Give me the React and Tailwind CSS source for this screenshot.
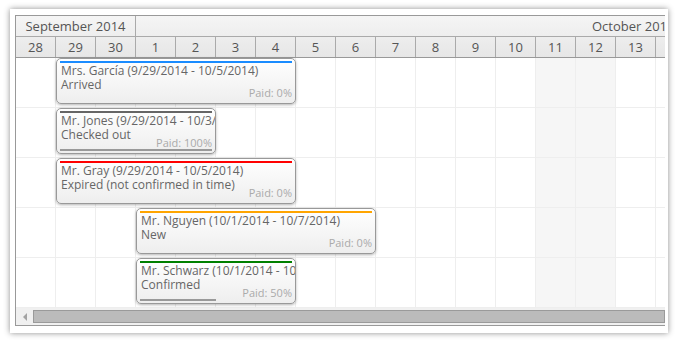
import React from 'react'

const days = [28, 29, 30, 1, 2, 3, 4, 5, 6, 7, 8, 9, 10, 11, 12, 13, 14]
const weekend = [11, 12]

const rows = [
  { start: 1, len: 6, name: 'Mrs. García (9/29/2014 - 10/5/2014)', status: 'Arrived', paid: 0, bar: 'bg-[#1a8cff]' },
  { start: 1, len: 4, name: 'Mr. Jones (9/29/2014 - 10/3/2014)', status: 'Checked out', paid: 100, bar: 'bg-[#666]' },
  { start: 1, len: 6, name: 'Mr. Gray (9/29/2014 - 10/5/2014)', status: 'Expired (not confirmed in time)', paid: 0, bar: 'bg-[#f00]' },
  { start: 3, len: 6, name: 'Mr. Nguyen (10/1/2014 - 10/7/2014)', status: 'New', paid: 0, bar: 'bg-[#ffa500]' },
  { start: 3, len: 4, name: 'Mr. Schwarz (10/1/2014 - 10/5/2014)', status: 'Confirmed', paid: 50, bar: 'bg-[#008000]' },
]

function Event({ ev }) {
  return (
    <div
      className="absolute top-0 h-[46px] rounded-[5px] border border-[#999] bg-gradient-to-b from-white to-[#eee] shadow-[0_1px_3px_rgba(0,0,0,0.3)] overflow-hidden"
      style={{ left: ev.start * 40, width: ev.len * 40 }}
    >
      <div className={`mx-[3px] mt-[2px] h-[2px] ${ev.bar}`} />
      <div className="pl-[4px] pt-[1px] text-[12px] leading-[14px] text-[#666] whitespace-nowrap">
        <div>{ev.name}</div>
        <div>{ev.status}</div>
      </div>
      <div className="absolute right-[3px] top-[28px] text-[11px] leading-[12px] text-[#aaa]">Paid: {ev.paid}%</div>
      {ev.paid > 0 && (
        <div className="absolute left-[3px] right-[3px] bottom-[2px] h-[2px]">
          <div className="h-full bg-[#999]" style={{ width: `${ev.paid}%` }} />
        </div>
      )}
    </div>
  )
}

export default function App() {
  return (
    <div className="w-[680px] h-[343px] bg-white pt-[9px] pl-[10px]" style={{ fontFamily: '"Open Sans", "Liberation Sans", sans-serif' }}>
      <div className="w-[658px] h-[324px] bg-white shadow-[0_0_6px_rgba(0,0,0,0.45)] pt-[6px] pl-[5px]">
        <div className="w-[650px] h-[311px] overflow-hidden border-l border-t border-b border-[#999] bg-white">
          {/* header */}
          <div className="w-[700px] bg-gradient-to-b from-[#f5f5f5] to-[#e6e6e6] text-[#555] text-[13px]">
            <div className="flex h-[21px] border-b border-[#aaa]">
              <div className="w-[120px] shrink-0 border-r border-[#aaa] text-center leading-[20px]">September 2014</div>
              <div className="flex-1 pl-[456px] leading-[20px] whitespace-nowrap">October 2014</div>
            </div>
            <div className="flex h-[21px] border-b border-[#999]">
              {days.map((d) => (
                <div key={d} className="w-[40px] shrink-0 border-r border-[#aaa] text-center leading-[20px]">
                  {d}
                </div>
              ))}
            </div>
          </div>
          {/* rows */}
          {rows.map((ev, i) => (
            <div key={i} className="relative flex w-[700px] h-[50px] border-b border-[#eee]">
              {days.map((d) => (
                <div
                  key={d}
                  className={`w-[40px] shrink-0 border-r border-[#eee] ${weekend.includes(d) ? 'bg-[#f6f6f6]' : 'bg-white'}`}
                />
              ))}
              <Event ev={ev} />
            </div>
          ))}
          {/* scrollbar */}
          <div className="flex items-center h-[17px] bg-[#f0f0f0]">
            <div className="w-[17px] flex items-center justify-center">
              <div className="w-0 h-0 border-y-[4px] border-y-transparent border-r-[4px] border-r-[#a3a3a3]" />
            </div>
            <div className="flex-1 h-[13px] bg-[#bbb] border border-[#9a9a9a]" />
          </div>
        </div>
      </div>
    </div>
  )
}
